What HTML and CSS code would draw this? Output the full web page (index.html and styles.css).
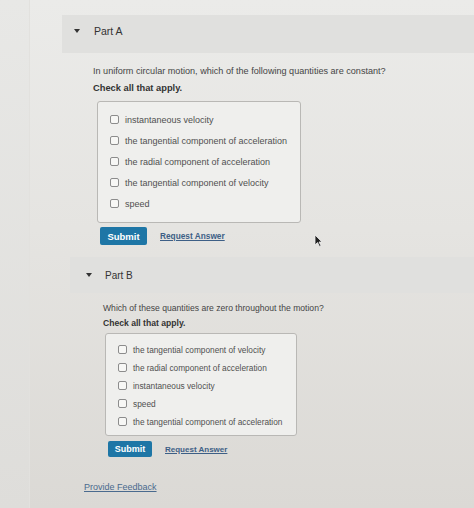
FILE: index.html
```html
<!DOCTYPE html>
<html>
<head>
<meta charset="utf-8">
<link rel="stylesheet" href="styles.css">
</head>
<body>
<div class="page">
  <div class="sidebar"></div>
  <main class="main">
    <section class="part part-a">
      <div class="part-head">
        <span class="tri"></span>
        <span class="part-title">Part A</span>
      </div>
      <div class="part-body">
        <p class="question">In uniform circular motion, which of the following quantities are constant?</p>
        <p class="check">Check all that apply.</p>
        <div class="options">
          <label class="opt"><span class="box"></span>instantaneous velocity</label>
          <label class="opt"><span class="box"></span>the tangential component of acceleration</label>
          <label class="opt"><span class="box"></span>the radial component of acceleration</label>
          <label class="opt"><span class="box"></span>the tangential component of velocity</label>
          <label class="opt"><span class="box"></span>speed</label>
        </div>
        <div class="actions">
          <button class="submit">Submit</button>
          <a class="link">Request Answer</a>
        </div>
      </div>
    </section>
    <section class="part part-b">
      <div class="part-head">
        <span class="tri"></span>
        <span class="part-title">Part B</span>
      </div>
      <div class="part-body">
        <p class="question">Which of these quantities are zero throughout the motion?</p>
        <p class="check">Check all that apply.</p>
        <div class="options">
          <label class="opt"><span class="box"></span>the tangential component of velocity</label>
          <label class="opt"><span class="box"></span>the radial component of acceleration</label>
          <label class="opt"><span class="box"></span>instantaneous velocity</label>
          <label class="opt"><span class="box"></span>speed</label>
          <label class="opt"><span class="box"></span>the tangential component of acceleration</label>
        </div>
        <div class="actions">
          <button class="submit">Submit</button>
          <a class="link">Request Answer</a>
        </div>
      </div>
    </section>
    <a class="feedback">Provide Feedback</a>
  </main>
  <svg class="cursor" width="9" height="13" viewBox="0 0 9 13"><path d="M1 1 L1 11 L3.5 8.5 L5.5 12.5 L7 11.8 L5 8 L8 8 Z" fill="#222" stroke="#eee" stroke-width="0.8"/></svg>
</div>
</body>
</html>
```

FILE: styles.css
```css
* { box-sizing: border-box; }
html, body { margin: 0; padding: 0; }
body {
  width: 474px;
  height: 508px;
  overflow: hidden;
  font-family: "Liberation Sans", Arial, sans-serif;
  background: linear-gradient(180deg, #ebebe9 0%, #e5e4e1 45%, #dbd9d5 100%);
  color: #444;
}
.page {
  position: relative;
  display: flex;
  height: 508px;
}
.sidebar {
  width: 30px;
  flex: none;
  background: linear-gradient(180deg, #e8e8e6 0%, #dedddA 100%);
  border-right: 1px solid #e2e1de;
}
.main {
  flex: 1;
  display: flex;
  flex-direction: column;
  padding-top: 15px;
}
.part-head {
  display: flex;
  align-items: center;
  background: #e0e0de;
  height: 38px;
}
.part-a .part-head { margin-left: 32px; padding-left: 12px; padding-bottom: 6px; }
.part-b .part-head { margin-left: 40px; padding-left: 16px; height: 36px; }
.tri {
  width: 0; height: 0;
  border-left: 3.5px solid transparent;
  border-right: 3.5px solid transparent;
  border-top: 4px solid #333;
}
.part-title {
  font-size: 10.5px;
  color: #333;
  margin-left: 14px;
}
.part-b .part-title { margin-left: 13px; font-size: 10px; }
.part-body { display: flex; flex-direction: column; align-items: flex-start; }
.part-a .part-body { padding-left: 63px; padding-top: 13px; }
.part-b .part-body { padding-left: 73px; padding-top: 10px; }
.question {
  margin: 0;
  font-size: 9.1px;
  color: #454545;
}
.check {
  margin: 7px 0 0 0;
  font-size: 9.3px;
  font-weight: bold;
  color: #333;
}
.part-b .question { font-size: 8.6px; }
.part-b .check { font-size: 8.6px; margin-top: 5px; }
.options {
  display: flex;
  flex-direction: column;
  border: 1px solid #b9b8b5;
  border-radius: 3px;
  background: #efefed;
}
.part-a .options { margin: 8px 0 0 4px; width: 204px; padding: 11px 0 12px 12px; gap: 8px; }
.part-b .options { margin: 5px 0 0 2px; width: 192px; padding: 10px 0 8px 12px; gap: 7px; }
.opt {
  display: flex;
  align-items: center;
  font-size: 9px;
  color: #505050;
  height: 13px;
}
.part-b .opt { font-size: 8.3px; height: 11px; }
.box {
  width: 9px; height: 9px;
  border: 1px solid #8c8c8c;
  border-radius: 2px;
  background: #f7f7f5;
  margin-right: 6px;
  flex: none;
}
.actions {
  display: flex;
  align-items: center;
}
.part-a .actions { margin: 4px 0 0 7px; }
.part-b .actions { margin: 5px 0 0 5px; }
.submit {
  border: none;
  background: #1e76a6;
  color: #fff;
  font-family: "Liberation Sans", Arial, sans-serif;
  font-weight: bold;
  font-size: 9.5px;
  padding: 0;
  width: 47px;
  height: 18px;
  border-radius: 2px;
}
.part-b .submit { width: 44px; height: 16px; font-size: 9px; }
.link {
  font-size: 8.3px;
  font-weight: bold;
  color: #3d5f86;
  text-decoration: underline;
  margin-left: 13px;
}
.part-b .link { font-size: 8px; }
.part-b { margin-top: 12px; }
.feedback {
  margin: 25px 0 0 54px;
  font-size: 9px;
  color: #4a6a8e;
  text-decoration: underline;
}
.cursor { position: absolute; left: 314px; top: 234px; }
```
